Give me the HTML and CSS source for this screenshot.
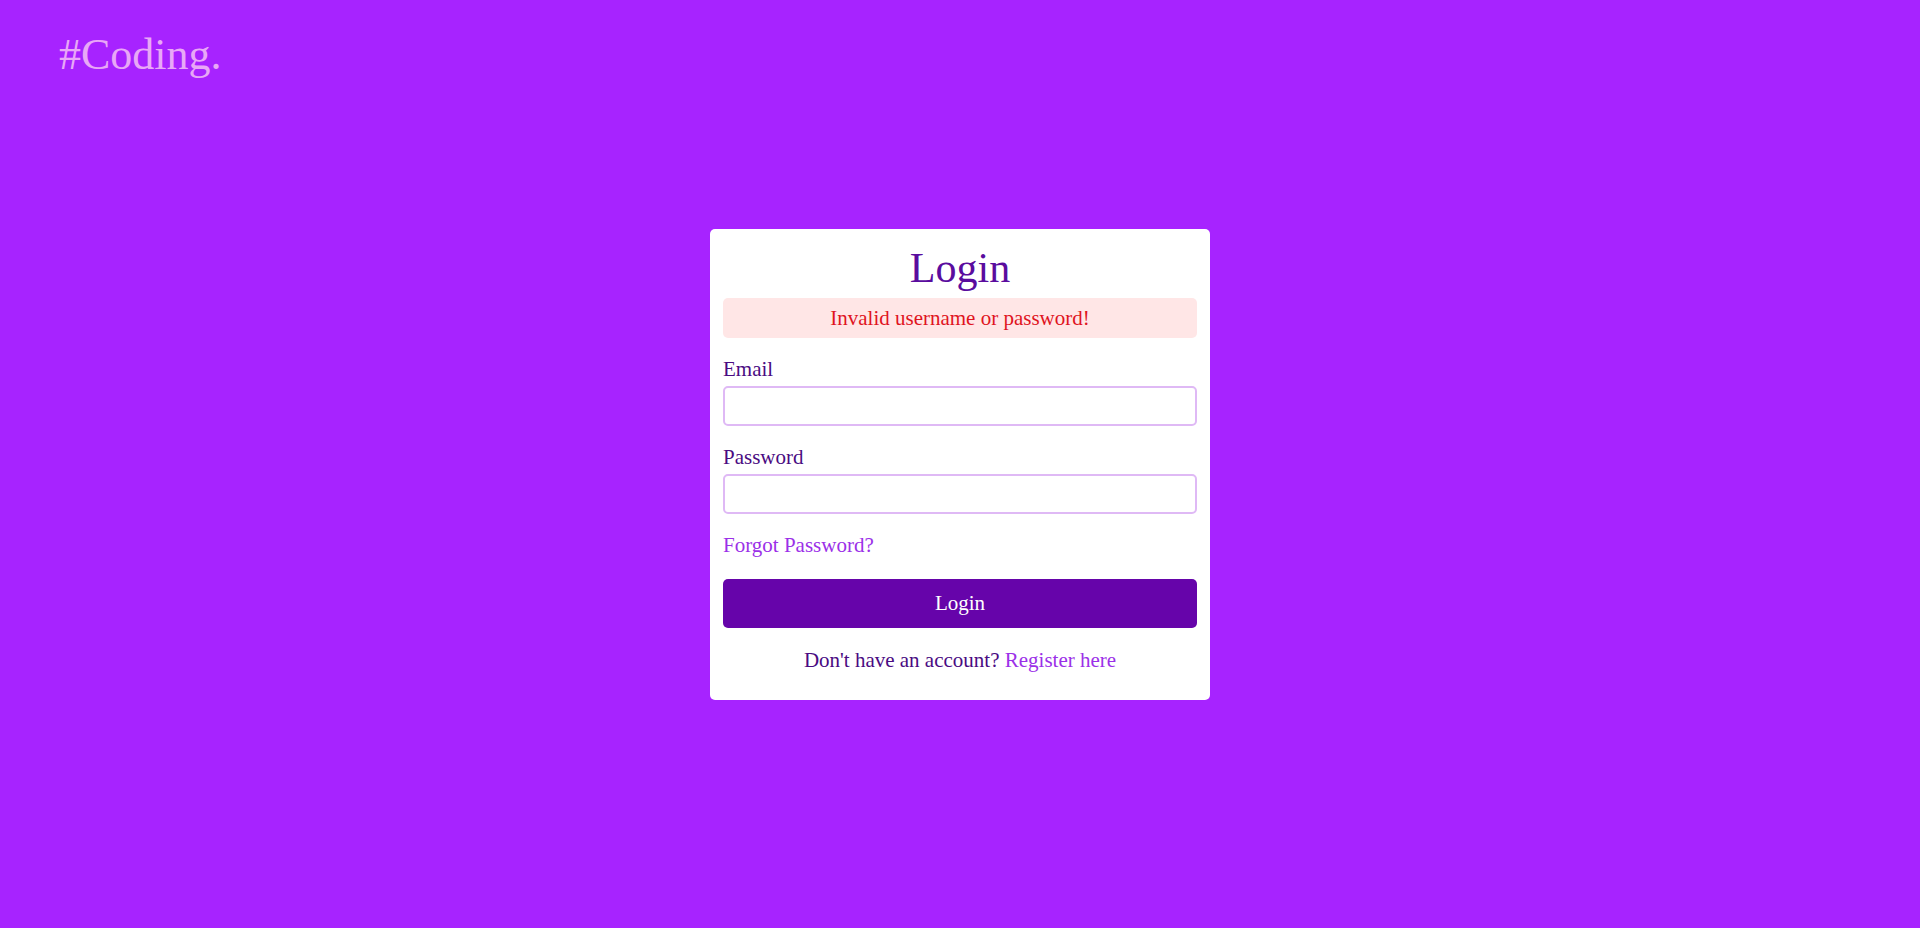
FILE: index.html
```html
<!DOCTYPE html>
<html lang="en">
<head>
<meta charset="utf-8">
<title>Login</title>
<link rel="stylesheet" href="styles.css">
</head>
<body>
<header class="topbar">
  <div class="logo">#Coding.</div>
</header>
<main class="stage">
  <form class="card">
    <h1 class="title">Login</h1>
    <div class="alert">Invalid username or password!</div>
    <label class="label" for="email">Email</label>
    <input class="field" id="email" type="email">
    <label class="label" for="password">Password</label>
    <input class="field" id="password" type="password">
    <a class="link forgot" href="#">Forgot Password?</a>
    <button class="btn" type="button">Login</button>
    <p class="foot">Don't have an account? <a class="link" href="#">Register here</a></p>
  </form>
</main>
</body>
</html>
```
FILE: styles.css
```css
* { box-sizing: border-box; }
html, body { margin: 0; height: 100%; }
body {
  background: #a723ff;
  font-family: "Liberation Serif", "DejaVu Serif", serif;
  position: relative;
}
.topbar {
  position: absolute;
  top: 0;
  left: 0;
  padding: 29px 0 0 59px;
}
.logo {
  font-size: 44px;
  line-height: 52px;
  color: #e8a8f6;
}
.stage {
  height: 100%;
  display: flex;
  align-items: center;
  justify-content: center;
}
.card {
  width: 500px;
  background: #fff;
  border-radius: 5px;
  padding: 14px 13px 27px;
  display: flex;
  flex-direction: column;
}
.title {
  margin: 0;
  font-size: 42px;
  line-height: 50px;
  font-weight: normal;
  text-align: center;
  color: #5a0c9e;
}
.alert {
  margin-top: 5px;
  height: 40px;
  line-height: 40px;
  background: #ffe6e6;
  color: #e0141e;
  border-radius: 5px;
  text-align: center;
  font-size: 21px;
}
.label {
  margin-top: 18px;
  font-size: 21px;
  line-height: 26px;
  color: #4a0b82;
}
.field {
  margin-top: 4px;
  height: 40px;
  width: 100%;
  border: 2px solid #dfb9f5;
  border-radius: 5px;
  background: #fff;
  font: inherit;
  outline: none;
}
.link {
  color: #9b30e8;
  text-decoration: none;
}
.forgot {
  margin-top: 18px;
  font-size: 21px;
  line-height: 26px;
  align-self: flex-start;
}
.btn {
  margin-top: 21px;
  height: 49px;
  border: none;
  border-radius: 5px;
  background: #6604aa;
  color: #fff;
  font-family: inherit;
  font-size: 21px;
  cursor: pointer;
}
.foot {
  margin: 19px 0 0;
  font-size: 21px;
  line-height: 26px;
  text-align: center;
  color: #4a0b82;
}
```
